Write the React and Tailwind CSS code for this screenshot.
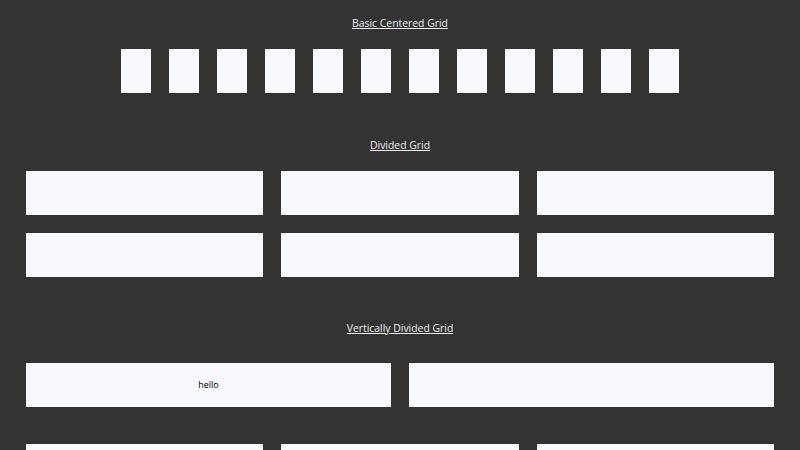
import React from 'react';

const box = 'bg-[#f8f9fd] h-[44px]';

function Title({ children, className = '' }) {
  return (
    <div className={`text-center text-[10.4px] leading-4 text-[#eeeeee] underline ${className}`}>
      {children}
    </div>
  );
}

export default function App() {
  return (
    <div className="min-h-screen bg-[#333333] pb-10" style={{ fontFamily: '"Open Sans", sans-serif' }}>
      <Title className="pt-[15px]">Basic Centered Grid</Title>
      <div className="mt-[18px] flex justify-center gap-[18px]">
        {Array.from({ length: 12 }).map((_, i) => (
          <div key={i} className={`${box} w-[30px]`} />
        ))}
      </div>

      <Title className="mt-[44px]">Divided Grid</Title>
      <div className="mt-[18px] px-[26px] grid grid-cols-3 gap-[18px]">
        {Array.from({ length: 6 }).map((_, i) => (
          <div key={i} className={box} />
        ))}
      </div>

      <Title className="mt-[43px]">Vertically Divided Grid</Title>
      <div className="mt-[27px] px-[26px] grid grid-cols-2 gap-[18px]">
        <div className={`${box} flex items-center justify-center text-[9px] text-black`}>hello</div>
        <div className={box} />
      </div>
      <div className="mt-[37px] px-[26px] grid grid-cols-3 gap-[18px]">
        {Array.from({ length: 3 }).map((_, i) => (
          <div key={i} className={box} />
        ))}
      </div>
    </div>
  );
}
